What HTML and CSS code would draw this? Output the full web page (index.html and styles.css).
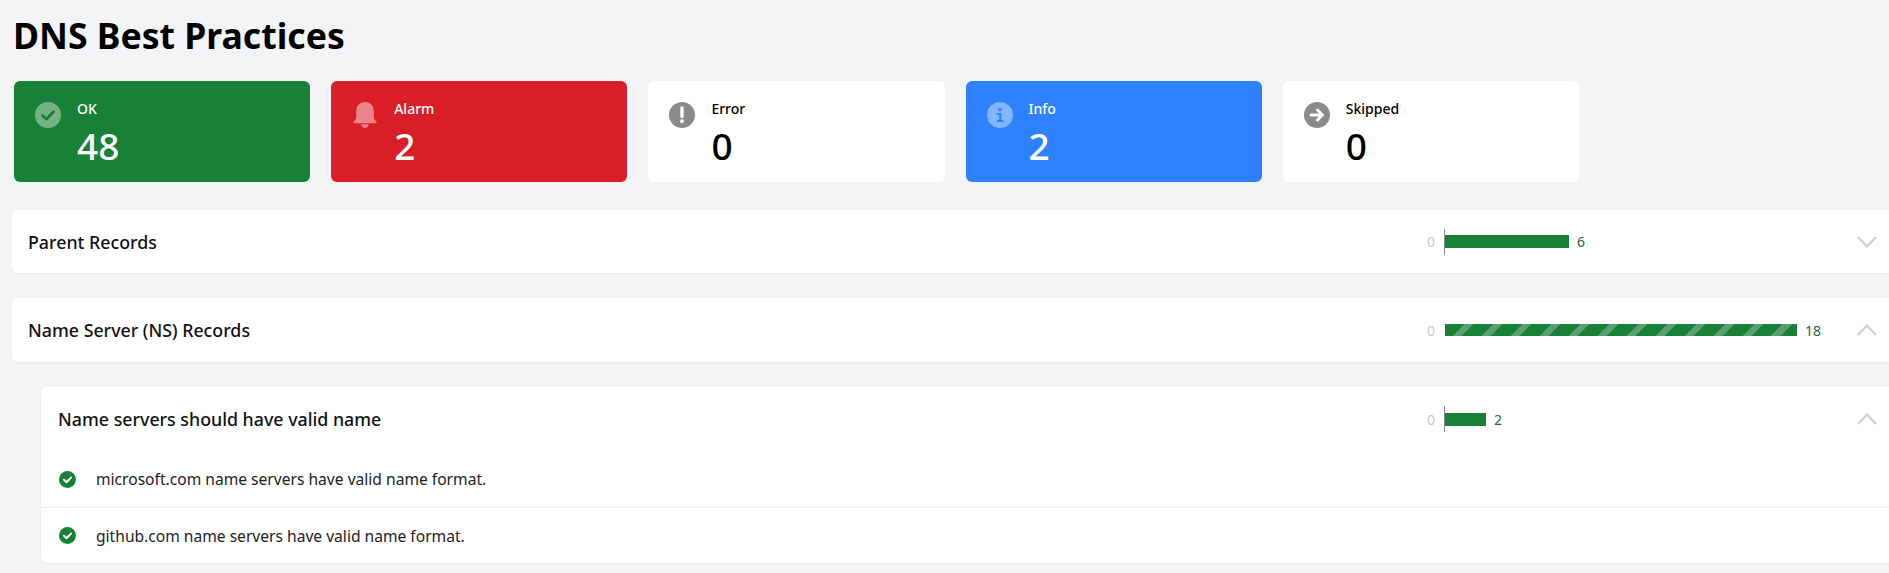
FILE: index.html
```html
<!DOCTYPE html>
<html lang="en">
<head>
<meta charset="utf-8">
<title>DNS Best Practices</title>
<link rel="stylesheet" href="styles.css">
</head>
<body>
<h1 class="page-title">DNS Best Practices</h1>
<div class="cards">
  <div class="card card-ok">
    <svg class="card-icon" viewBox="0 0 26 26"><circle cx="13" cy="13" r="13" fill="#fff" fill-opacity=".4"/><path d="M7.500 13.500l3.800 3.800 7.200-7.600" fill="none" stroke="#198038" stroke-width="2.800" stroke-linecap="round" stroke-linejoin="round"/></svg>
    <div class="card-text"><div class="card-label">OK</div><div class="card-value">48</div></div>
  </div>
  <div class="card card-alarm">
    <svg class="card-icon icon-bell" viewBox="0 0 26 26"><path d="M13 0c5.200 0 8.800 3.600 8.800 8.800v6.200c0 2 1 3.200 2.500 4.400.7.600.3 1.800-.7 1.800H2.400c-1 0-1.400-1.200-.7-1.800C3.200 18.200 4.200 17 4.200 15V8.800C4.200 3.600 7.800 0 13 0z" fill="#fff" fill-opacity=".45"/><path d="M9.300 22.300h7.400c0 2-1.600 3.700-3.700 3.700s-3.700-1.700-3.700-3.700z" fill="#fff" fill-opacity=".45"/></svg>
    <div class="card-text"><div class="card-label">Alarm</div><div class="card-value">2</div></div>
  </div>
  <div class="card">
    <svg class="card-icon" viewBox="0 0 26 26"><circle cx="13" cy="13" r="13" fill="#8a8a8a"/><path d="M13 6v8.500" stroke="#fff" stroke-width="3.400" stroke-linecap="round"/><circle cx="13" cy="19.300" r="2" fill="#fff"/></svg>
    <div class="card-text"><div class="card-label">Error</div><div class="card-value">0</div></div>
  </div>
  <div class="card card-info">
    <svg class="card-icon" viewBox="0 0 26 26"><circle cx="13" cy="13" r="13" fill="#fff" fill-opacity=".4"/><circle cx="13" cy="7.500" r="1.800" fill="#2f82ff"/><path d="M10.800 12h2.500v6.500M10.800 19h4.700" fill="none" stroke="#2f82ff" stroke-width="2.200" stroke-linecap="round"/></svg>
    <div class="card-text"><div class="card-label">Info</div><div class="card-value">2</div></div>
  </div>
  <div class="card">
    <svg class="card-icon" viewBox="0 0 26 26"><circle cx="13" cy="13" r="13" fill="#8a8a8a"/><path d="M7 13h11.500M13.500 8l5 5-5 5" fill="none" stroke="#fff" stroke-width="3" stroke-linecap="round" stroke-linejoin="round"/></svg>
    <div class="card-text"><div class="card-label">Skipped</div><div class="card-value">0</div></div>
  </div>
</div>

<section class="panel">
  <div class="panel-head">
    <div class="panel-title">Parent Records</div>
    <div class="chart">
      <span class="zero">0</span><span class="axis"></span><span class="bar" style="width:124px"></span><span class="count">6</span>
    </div>
    <svg class="chevron" viewBox="0 0 20 12"><path d="M1 1l9 9.500L19 1" fill="none" stroke="#cfcfcf" stroke-width="2.200"/></svg>
  </div>
</section>

<section class="panel">
  <div class="panel-head panel-head-tall">
    <div class="panel-title">Name Server (NS) Records</div>
    <div class="chart">
      <span class="zero">0</span><span class="axis axis-hidden"></span><span class="bar bar-striped" style="width:352px"></span><span class="count">18</span>
    </div>
    <svg class="chevron" viewBox="0 0 20 12"><path d="M1 11L10 1.500l9 9.500" fill="none" stroke="#cfcfcf" stroke-width="2.200"/></svg>
  </div>
</section>

<section class="panel panel-nested">
  <div class="panel-head">
    <div class="panel-title">Name servers should have valid name</div>
    <div class="chart">
      <span class="zero">0</span><span class="axis"></span><span class="bar" style="width:41px"></span><span class="count">2</span>
    </div>
    <svg class="chevron" viewBox="0 0 20 12"><path d="M1 11L10 1.500l9 9.500" fill="none" stroke="#cfcfcf" stroke-width="2.200"/></svg>
  </div>
  <div class="result">
    <svg class="result-icon" viewBox="0 0 17 17"><circle cx="8.500" cy="8.500" r="8.500" fill="#198038"/><path d="M5 8.800l2.500 2.500L12 6.600" fill="none" stroke="#fff" stroke-width="2" stroke-linecap="round" stroke-linejoin="round"/></svg>
    <span>microsoft.com name servers have valid name format.</span>
  </div>
  <div class="result">
    <svg class="result-icon" viewBox="0 0 17 17"><circle cx="8.500" cy="8.500" r="8.500" fill="#198038"/><path d="M5 8.800l2.500 2.500L12 6.600" fill="none" stroke="#fff" stroke-width="2" stroke-linecap="round" stroke-linejoin="round"/></svg>
    <span>github.com name servers have valid name format.</span>
  </div>
</section>
</body>
</html>
```
FILE: styles.css
```css
* { box-sizing: border-box; }
html, body { margin: 0; padding: 0; }
body {
  width: 1889px;
  height: 573px;
  overflow: hidden;
  background: #f3f4f6;
  color: #111;
  font-family: "Noto Sans", "Open Sans", sans-serif;
  padding-left: 12px;
}
.page-title {
  margin: 15px 0 26px 1px;
  font-size: 35.600px;
  line-height: 40px;
  font-weight: 700;
  color: #000;
}
.cards {
  display: flex;
  gap: 21px;
  margin: 0 0 28px 2px;
}
.card {
  width: 296.200px;
  height: 101px;
  display: flex;
  align-items: flex-start;
  gap: 16px;
  padding: 15px 21px;
  background: #fff;
  border-radius: 6px;
  color: #000;
}
.card-ok { background: #198038; color: #fff; }
.card-alarm { background: #da1e28; color: #fff; }
.card-info { background: #2f82ff; color: #fff; }
.card-icon { width: 26px; height: 26px; margin-top: 6px; flex: none; }
.card-text { display: flex; flex-direction: column; padding-top: 1px; }
.card-label { font-size: 14px; line-height: 24px; font-weight: 500; }
.card-value { font-size: 37px; line-height: 50px; font-weight: 500; }
.panel {
  background: #fff;
  margin-bottom: 25px;
  border-radius: 6px 0 0 6px;
  box-shadow: 0 1px 2px rgba(0, 0, 0, .06);
}
.panel-nested { margin-left: 29px; }
.panel-head {
  display: flex;
  align-items: center;
  height: 63px;
  padding: 0 12px 0 16px;
}
.panel-head-tall { height: 64px; }
.panel-nested .panel-head { height: 64px; padding-left: 17px; }
.panel-title { flex: 1; font-size: 17.800px; font-weight: 500; color: #111; }
.chart {
  width: 420px;
  display: flex;
  align-items: center;
  margin-right: 17px;
}
.zero { width: 15px; font-size: 14px; color: #c8c8c8; text-align: right; margin-right: 9px; }
.axis { width: 1px; height: 26px; background: #8a8a8a; }
.axis-hidden { background: transparent; }
.bar { height: 13px; background: #198038; }
.bar-striped {
  height: 12px;
  background: repeating-linear-gradient(135deg, #198038 0, #198038 13.500px, #5a9f72 13.500px, #5a9f72 20.500px);
}
.count { margin-left: 8px; font-size: 14px; color: #2a6540; }
.chevron { width: 20px; height: 12px; flex: none; }
.result {
  display: flex;
  align-items: center;
  gap: 20px;
  height: 56px;
  padding-left: 18px;
  font-size: 15.600px;
  color: #222;
}
.result + .result { border-top: 1px solid #f1f1f1; }
.result-icon { width: 17px; height: 17px; flex: none; }
```
